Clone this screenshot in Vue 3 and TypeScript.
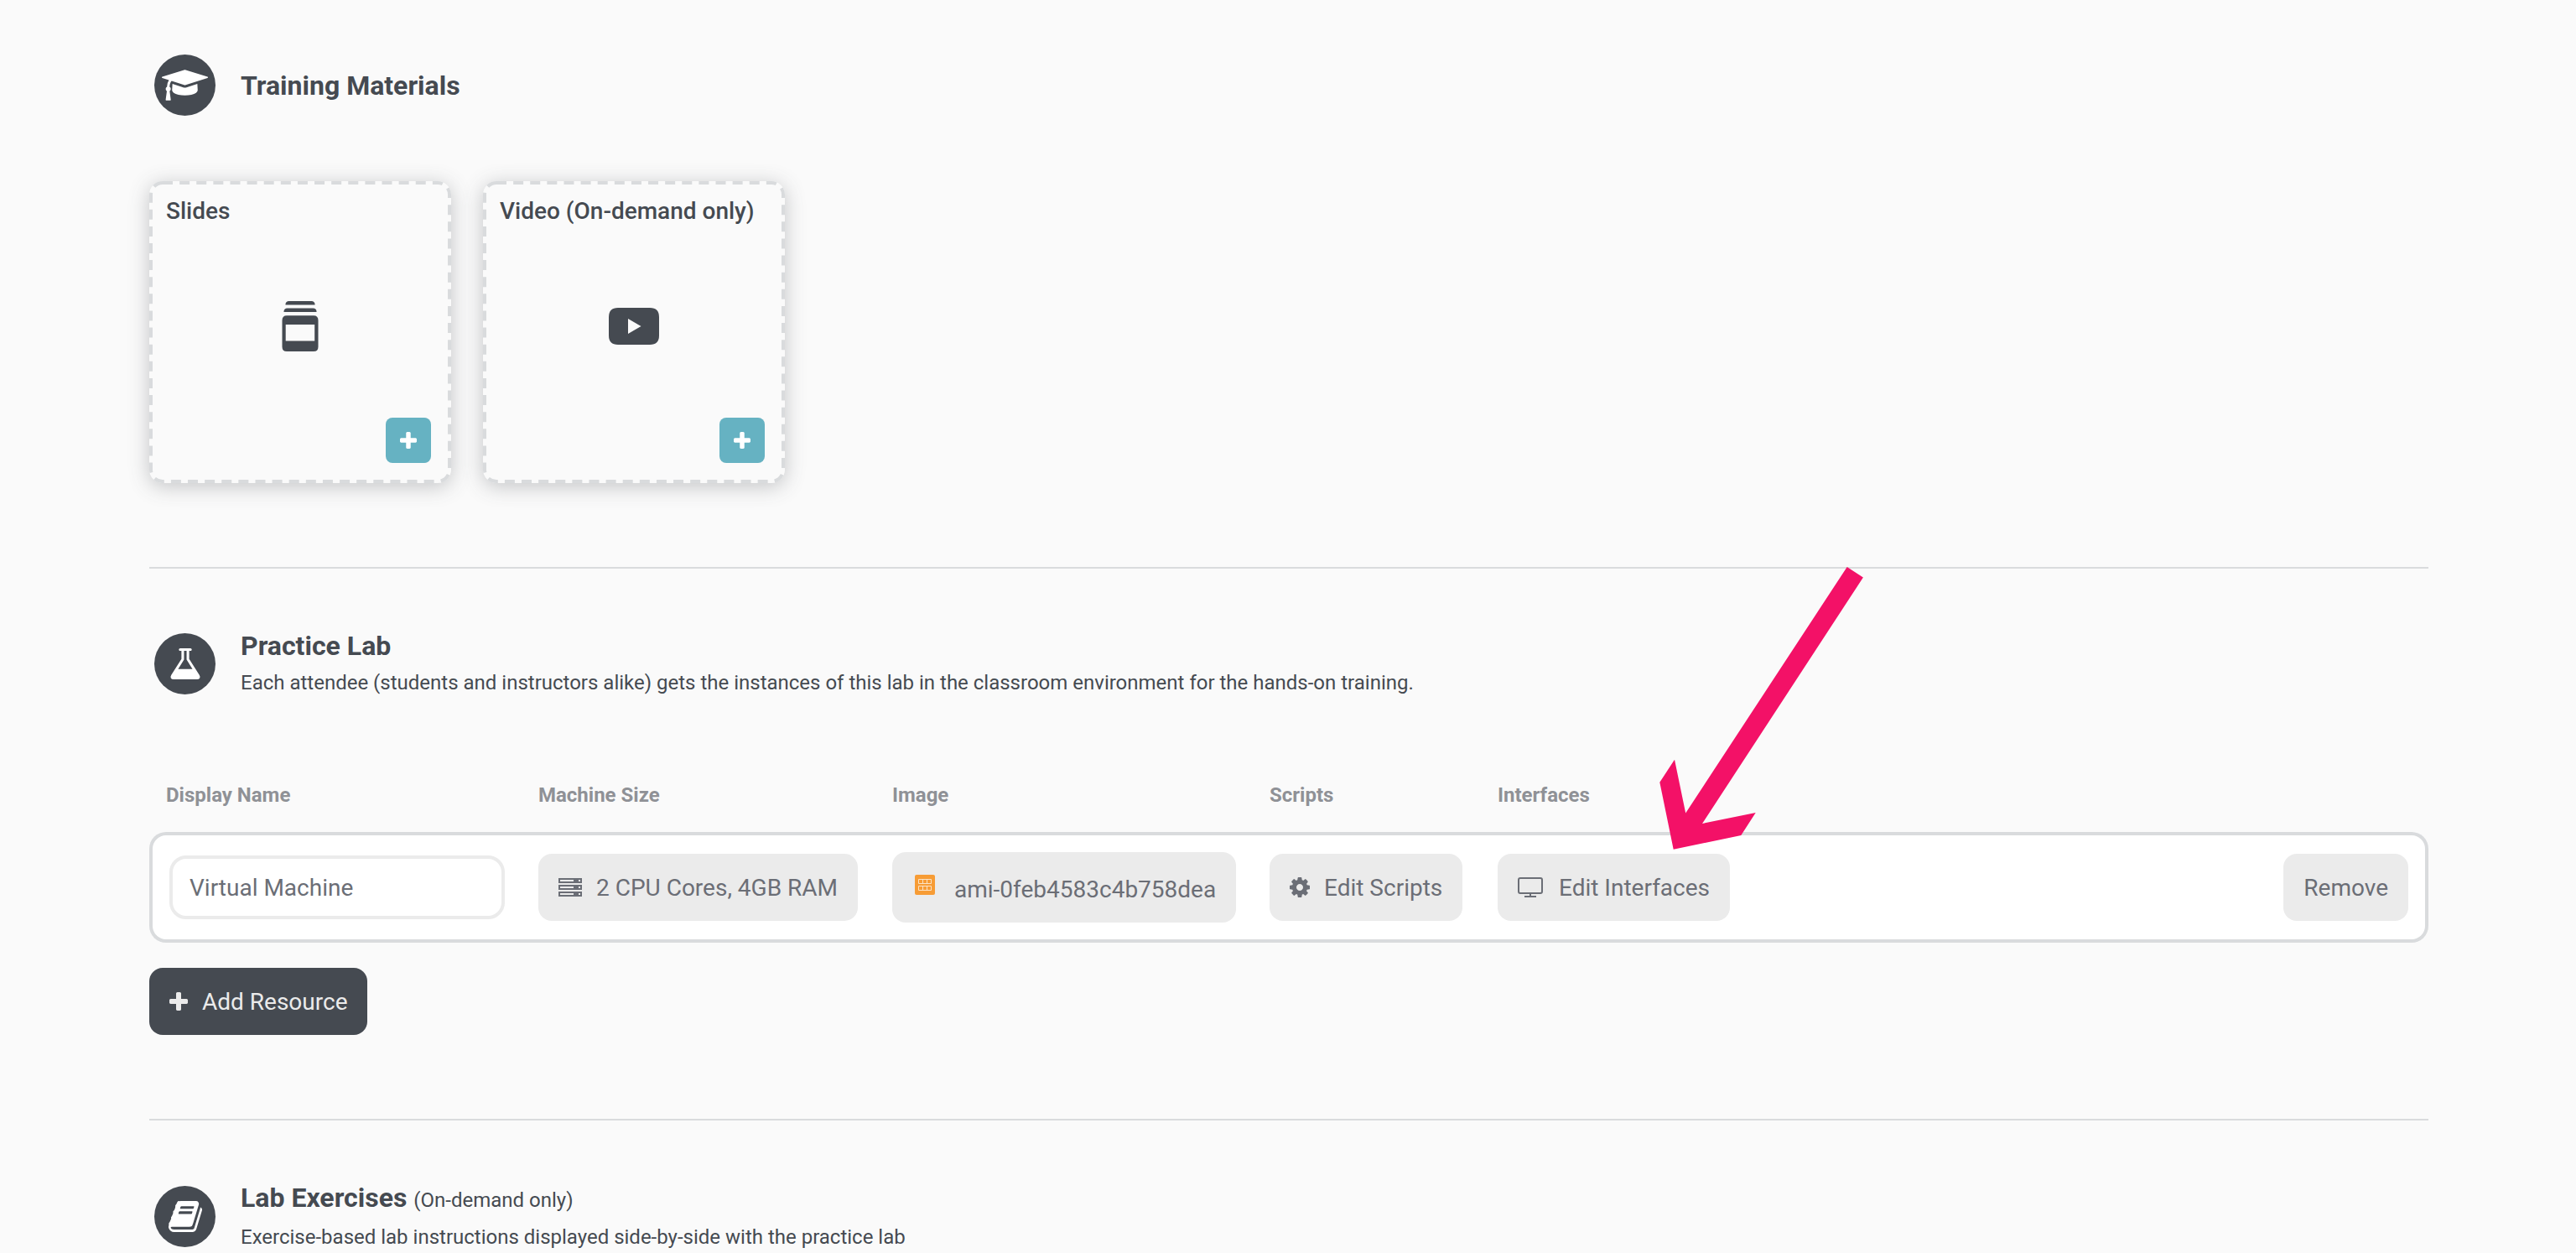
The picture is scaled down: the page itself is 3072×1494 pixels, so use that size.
<script setup lang="ts">
import { ref } from 'vue'

interface Material {
  title: string
  icon: 'slides' | 'video'
}

const materials: Material[] = [
  { title: 'Slides', icon: 'slides' },
  { title: 'Video (On-demand only)', icon: 'video' },
]

const displayName = ref('Virtual Machine')

const plusPath =
  'M1600 736v192q0 40-28 68t-68 28h-416v416q0 40-28 68t-68 28H800q-40 0-68-28t-28-68v-416H288q-40 0-68-28t-28-68V736q0-40 28-68t68-28h416V224q0-40 28-68t68-28h192q40 0 68 28t28 68v416h416q40 0 68 28t28 68z'
</script>

<template>
  <main class="page">
    <section>
      <header class="section-head">
        <span class="badge">
          <svg width="55" height="37" viewBox="0 128 2304 1536" aria-hidden="true">
            <path d="M1774 836l18 316q4 69-82 128t-235 93.500-323 34.500-323-34.500-235-93.500-82-128l18-316 574 181q22 7 48 7t48-7zm530-324q0 23-22 31L1162 895q-4 1-10 1t-10-1L490 689q-43 34-71 111.500T385 979q63 36 63 109 0 69-58 107l58 433q2 14-8 25-9 11-24 11H224q-15 0-24-11-10-11-8-25l58-433q-58-38-58-107 0-73 65-111 11-207 98-330L22 543Q0 535 0 512t22-31L1142 129q4-1 10-1t10 1l1120 352q22 8 22 31z" />
          </svg>
        </span>
        <h2>Training Materials</h2>
      </header>

      <div class="cards">
        <article v-for="m in materials" :key="m.title" class="card">
          <svg class="card-outline" viewBox="0 0 360 360" aria-hidden="true">
            <rect x="2" y="2" width="356" height="356" rx="14" />
          </svg>
          <h3>{{ m.title }}</h3>
          <div class="card-icon">
            <svg v-if="m.icon === 'slides'" width="44" height="60" viewBox="0 0 44 60" aria-hidden="true">
              <path d="M4.500 4.500V3.500Q5 0 8.500 0H35.500Q39 0 39.500 3.500V4.500Z" />
              <path d="M2.500 13V12Q3 8.500 6.500 8.500H37.500Q41 8.500 41.500 12V13Z" />
              <path fill-rule="evenodd" d="M6 17.300H38Q43.500 17.300 43.500 23V54.500Q43.500 60 38 60H6Q.5 60 .5 54.500V23Q.5 17.300 6 17.300ZM4.700 28V47.500H39.200V28Z" />
            </svg>
            <svg v-else width="60" height="44" viewBox="0 0 60 44" aria-hidden="true">
              <path fill-rule="evenodd" d="M11 0H49Q60 0 60 11V33Q60 44 49 44H11Q0 44 0 33V11Q0 0 11 0ZM23 13V31L38.500 22Z" />
            </svg>
          </div>
          <button type="button" class="add" :aria-label="`Add ${m.title}`">
            <svg width="20" height="20" viewBox="192 128 1408 1408" aria-hidden="true"><path :d="plusPath" /></svg>
          </button>
        </article>
      </div>
    </section>

    <section class="divided">
      <header class="section-head">
        <span class="badge">
          <svg width="40" height="37" viewBox="0 128 1664 1536" aria-hidden="true">
            <path d="M1527 1447q56 89 21.500 153t-140.500 64h-1152q-106 0-140.500-64t21.500-153l503-793v-399h-64q-26 0-45-19t-19-45 19-45 45-19h512q26 0 45 19t19 45-19 45-45 19h-64v399zm-779-725l-272 429h712l-272-429-20-31v-436h-128v436z" />
          </svg>
        </span>
        <div>
          <h2>Practice Lab</h2>
          <p>Each attendee (students and instructors alike) gets the instances of this lab in the classroom environment for the hands-on training.</p>
        </div>
      </header>

      <table class="resources">
        <colgroup>
          <col class="col-name" />
          <col class="col-size" />
          <col class="col-image" />
          <col class="col-scripts" />
          <col class="col-interfaces" />
          <col />
        </colgroup>
        <thead>
          <tr>
            <th id="display-name" scope="col">Display Name</th>
            <th scope="col">Machine Size</th>
            <th scope="col">Image</th>
            <th scope="col">Scripts</th>
            <th scope="col">Interfaces</th>
            <td></td>
          </tr>
        </thead>
        <tbody>
          <tr>
            <td><input v-model="displayName" type="text" aria-labelledby="display-name" /></td>
            <td>
              <button type="button" class="btn">
                <svg width="28" height="22" viewBox="0 0 28 22" aria-hidden="true">
                  <path fill-rule="evenodd" d="M0 0H28V6H0ZM2 2V4H18V2ZM24 2V4H26V2ZM0 8H28V14H0ZM2 10V12H18V10ZM24 10V12H26V10ZM0 16H28V22H0ZM2 18V20H18V18ZM24 18V20H26V18Z" />
                </svg>
                2 CPU Cores, 4GB RAM
              </button>
            </td>
            <td>
              <button type="button" class="btn btn-image">
                <svg width="24" height="24" viewBox="0 0 24 24" aria-hidden="true">
                  <rect width="24" height="24" rx="2" fill="#f79c35" />
                  <path d="M4.500 5.500H19.500V10.500H4.500ZM4.500 13.500H19.500V18.500H4.500ZM9.500 5.500V10.500M14.500 5.500V10.500M9.500 13.500V18.500M14.500 13.500V18.500" fill="none" stroke="#fce3c5" />
                </svg>
                ami-0feb4583c4b758dea
              </button>
            </td>
            <td>
              <button type="button" class="btn">
                <svg width="24" height="24" viewBox="128 128 1536 1536" aria-hidden="true">
                  <path d="M1152 896q0-106-75-181t-181-75-181 75-75 181 75 181 181 75 181-75 75-181zm512-109v222q0 12-8 23t-20 13l-185 28q-19 54-39 91 35 50 107 138 10 12 10 25t-9 23q-27 37-99 108t-94 71q-12 0-26-9l-138-108q-44 23-91 38-16 136-29 186-7 28-36 28H785q-14 0-24.500-8.500T749 1635l-28-184q-49-16-90-37l-141 107q-10 9-25 9-14 0-25-11-126-114-165-168-7-10-7-23 0-12 8-23 15-21 51-66.500t54-70.500q-27-50-41-99l-183-27q-13-2-21-12.500t-8-23.500V783q0-12 8-23t19-13l186-28q14-46 39-92-40-57-107-138-10-12-10-24 0-10 9-23 26-36 98.500-107.500T465 263q13 0 26 10l138 107q44-23 91-38 16-136 29-186 7-28 36-28h222q14 0 24.500 8.500T1043 157l28 184q49 16 90 37l142-107q9-9 24-9 13 0 25 10 129 119 165 170 7 8 7 22 0 12-8 23-15 21-51 66.500t-54 70.500q26 50 41 98l183 28q13 2 21 12.500t8 23.500z" />
                </svg>
                Edit Scripts
              </button>
            </td>
            <td>
              <button type="button" class="btn">
                <svg width="32" height="24" viewBox="0 0 32 24" aria-hidden="true">
                  <rect x="1" y="1" width="28" height="18" rx="2" fill="none" stroke="currentColor" stroke-width="2" />
                  <path d="M14 20H16V22H22V24H8V22H14Z" />
                </svg>
                Edit Interfaces
              </button>
            </td>
            <td class="actions"><button type="button" class="btn">Remove</button></td>
          </tr>
        </tbody>
      </table>

      <button type="button" class="btn btn-dark">
        <svg width="22" height="22" viewBox="192 128 1408 1408" aria-hidden="true"><path :d="plusPath" /></svg>
        Add Resource
      </button>

      <!-- Callout arrow pointing at "Edit Interfaces" -->
      <svg class="callout" width="244" height="338" viewBox="0 0 244 338" aria-hidden="true">
        <path d="M17.700 336.700L98.300 320L115.700 293L52 306L243.900 12.500L224.700 0L32.200 293.500L19 229.700L1.300 256.700Z" />
      </svg>
    </section>

    <section class="divided">
      <header class="section-head">
        <span class="badge">
          <svg width="40" height="37" viewBox="0 128 1664 1536" aria-hidden="true">
            <path d="M1639 478q40 57 18 129l-275 906q-19 64-76.500 107.500T1183 1664H260q-77 0-148.500-53.500T12 1479q-24-67-2-127 0-4 3-27t4-37q1-8-3-21.500t-3-19.500q2-11 8-21t16.500-23.500T52 1179q23-38 45-91.500t30-91.500q3-10 .5-30t-.5-28q3-11 17-28t17-23q21-36 42-92t25-90q1-9-2.500-32t.5-28q4-13 22-30.500t22-22.500q19-26 42.500-84.500T339 411q1-8-3-25.500t-2-26.500q2-8 9-18t18-23 17-21q8-12 16.500-30.500t15-35 16-36 19.500-32 26.500-23.500 36-11.500T554 134l-1 3q38-9 51-9h761q74 0 114 56t18 130l-274 906q-36 119-71.500 153.500T1023 1408H154q-27 0-38 15-11 16-1 43 24 70 144 70h923q29 0 56-15.500t35-41.500l300-987q7-22 5-57 38 15 59 43zM575 480q-4 13 2 22.500t20 9.500h608q13 0 25.500-9.500T1247 480l21-64q4-13-2-22.500t-20-9.500H638q-13 0-25.500 9.500T596 416zm-83 256q-4 13 2 22.500t20 9.500h608q13 0 25.500-9.500T1164 736l21-64q4-13-2-22.500t-20-9.500H555q-13 0-25.500 9.500T513 672z" />
          </svg>
        </span>
        <div>
          <h2>Lab Exercises <small>(On-demand only)</small></h2>
          <p>Exercise-based lab instructions displayed side-by-side with the practice lab</p>
        </div>
      </header>
    </section>
  </main>
</template>

<style>
body {
  background: #fafafa;
}
</style>

<style scoped>
.page {
  padding: 65px 176px 0 178px;
  font-family: Roboto, 'Liberation Sans', sans-serif;
  color: #454a51;
}

h2,
h3,
p {
  margin: 0;
}

h2 {
  font-size: 32px;
  line-height: 40px;
  font-weight: 700;
}

h2 small {
  font-size: 24px;
  font-weight: 400;
}

p {
  margin-top: 6px;
  font-size: 24px;
  line-height: 36px;
}

svg {
  display: block;
  flex: none;
  fill: currentColor;
}

.section-head {
  display: flex;
  align-items: center;
  gap: 30px;
  padding-left: 6px;
}

.badge {
  display: grid;
  place-items: center;
  flex: none;
  width: 73px;
  height: 73px;
  border-radius: 50%;
  background: #454a51;
  color: #fff;
}

.cards {
  display: flex;
  gap: 38px;
  margin: 78px 0 100px;
}

.card {
  position: relative;
  box-sizing: border-box;
  display: flex;
  flex-direction: column;
  width: 360px;
  height: 360px;
  padding: 18px 24px 24px 20px;
  border-radius: 16px;
  box-shadow: 0 4px 24px rgba(69, 74, 81, 0.3);
  background: #fafafa;
}

.card-outline {
  position: absolute;
  inset: 0;
  fill: none;
  stroke: #d9dbdd;
  stroke-width: 4px;
  stroke-dasharray: 12 8.116;
}

.card h3 {
  font-size: 28px;
  line-height: 36px;
  font-weight: 500;
}

.card-icon {
  flex: 1;
  display: grid;
  place-items: center;
  padding: 10px 0 0 4px;
}

.add {
  display: grid;
  place-items: center;
  align-self: flex-end;
  width: 54px;
  height: 54px;
  padding: 0;
  border: 0;
  border-radius: 8px;
  background: #66b2c2;
  color: #fff;
}

.divided {
  position: relative;
  border-top: 2px solid #d9dbdd;
  padding: 72px 0 100px;
}

.divided:last-child {
  padding-bottom: 0;
}

.resources {
  width: 100%;
  margin: 100px 0 30px;
  table-layout: fixed;
  border-collapse: separate;
  border-spacing: 0;
}

.col-name {
  width: 444px;
}

.col-size {
  width: 422px;
}

.col-image {
  width: 450px;
}

.col-scripts {
  width: 272px;
}

.col-interfaces {
  width: 316px;
}

th {
  padding: 0 20px 28px;
  text-align: left;
  font-size: 24px;
  line-height: 32px;
  font-weight: 700;
  color: #8f9196;
}

tbody td {
  padding: 20px;
  border: solid #d9dbdd;
  border-width: 4px 0;
  background: #fff;
}

tbody td:first-child {
  border-left-width: 4px;
  border-radius: 20px 0 0 20px;
}

tbody td:last-child {
  border-right-width: 4px;
  border-radius: 0 20px 20px 0;
}

input {
  display: block;
  box-sizing: border-box;
  width: 100%;
  height: 76px;
  padding: 0 20px;
  border: 4px solid #ebebeb;
  border-radius: 20px;
  background: #fff;
  font: 28px Roboto, 'Liberation Sans', sans-serif;
  color: #6b6e76;
}

.btn {
  display: flex;
  align-items: center;
  gap: 17px;
  height: 80px;
  padding: 0 24px;
  border: 0;
  border-radius: 16px;
  background: #ebebeb;
  font: 28px Roboto, 'Liberation Sans', sans-serif;
  white-space: nowrap;
  color: #6b6e76;
}

.btn-image {
  gap: 23px;
  height: 84px;
  padding: 4px 24px 0 27px;
}

.btn-image svg {
  margin-bottom: 10px;
}

.btn-dark {
  background: #454a51;
  color: #ebebeb;
}

.actions .btn {
  margin-left: auto;
}

.callout {
  position: absolute;
  top: -2px;
  left: 1800px;
  color: #f31167;
  pointer-events: none;
}
</style>
